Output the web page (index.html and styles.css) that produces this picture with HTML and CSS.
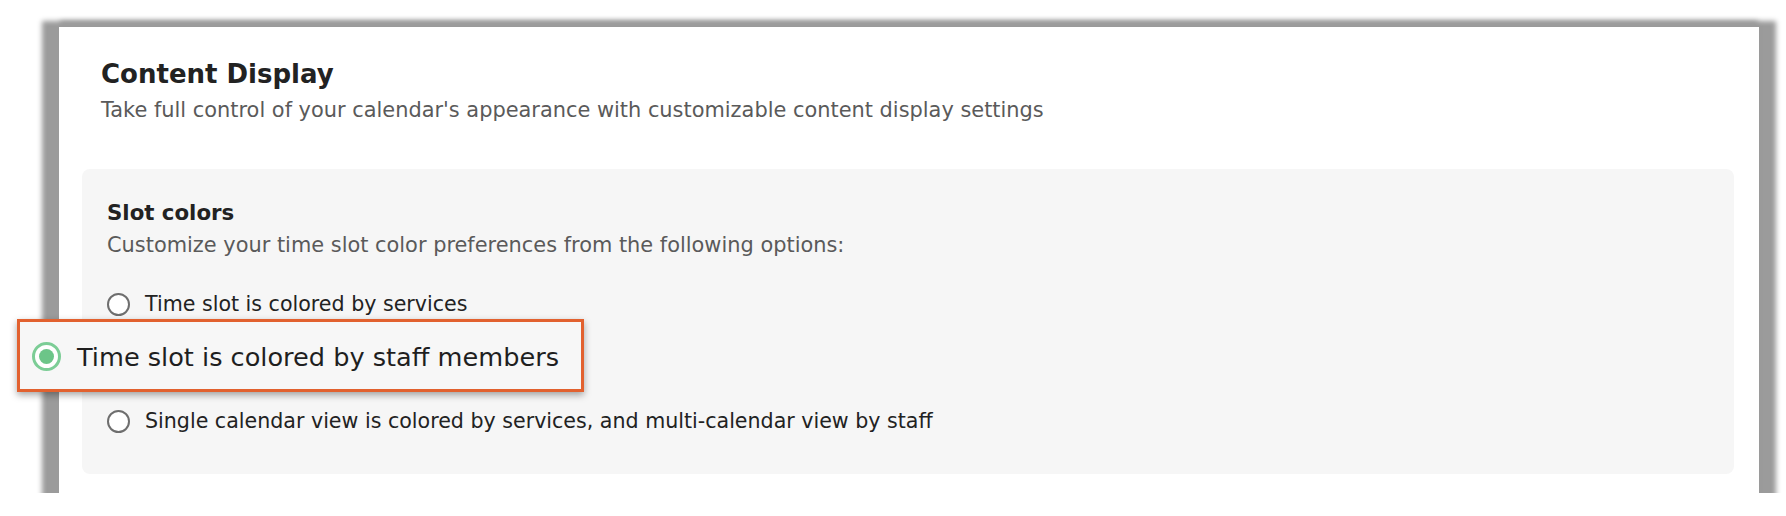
FILE: index.html
```html
<!DOCTYPE html>
<html lang="en">
<head>
<meta charset="utf-8">
<title>Content Display</title>
<link rel="stylesheet" href="styles.css">
</head>
<body>
<div class="stage">
  <section class="card">
    <header class="card-head">
      <h1 class="card-title">Content Display</h1>
      <p class="card-sub">Take full control of your calendar's appearance with customizable content display settings</p>
    </header>
    <div class="panel">
      <h2 class="panel-title">Slot colors</h2>
      <p class="panel-desc">Customize your time slot color preferences from the following options:</p>
      <div class="options">
        <div class="option"><span class="radio"></span><span class="option-text">Time slot is colored by services</span></div>
        <div class="option option-callout">
          <span class="radio-on"><span class="radio-dot"></span></span>
          <span class="callout-text">Time slot is colored by staff members</span>
        </div>
        <div class="option option-last"><span class="radio"></span><span class="option-text">Single calendar view is colored by services, and multi-calendar view by staff</span></div>
      </div>
    </div>
  </section>
</div>
</body>
</html>
```

FILE: styles.css
```css
* { box-sizing: border-box; }
html, body { margin: 0; padding: 0; background: #ffffff; }
body { font-family: "DejaVu Sans", "Noto Sans", sans-serif; color: #222222; }

.stage { padding: 27px 0 0 59px; }

.card {
  width: 1700px;
  height: 466px;
  background: #ffffff;
  padding: 30px 25px 0 23px;
  box-shadow: -9px 2px 5px 8px #9b9b9b, 9px 2px 5px 8px #9b9b9b;
}

.card-head { padding-left: 19px; }
.card-title {
  margin: 0;
  font-size: 26px;
  line-height: 34px;
  font-weight: 600;
  color: #222222;
}
.card-sub {
  margin: 5px 0 0;
  font-size: 20.9px;
  line-height: 28px;
  color: #5a5a5a;
}

.panel {
  margin-top: 45px;
  background: #f6f6f6;
  border-radius: 8px;
  padding: 30px 25px 39px;
}
.panel-title {
  margin: 0;
  font-size: 21.3px;
  line-height: 28px;
  font-weight: 600;
  color: #222222;
}
.panel-desc {
  margin: 5px 0 0;
  font-size: 20.9px;
  line-height: 26px;
  color: #5a5a5a;
}

.options {
  margin-top: 32px;
  display: flex;
  flex-direction: column;
  align-items: flex-start;
}
.option {
  display: flex;
  align-items: center;
  gap: 15px;
  height: 28px;
  font-size: 20.6px;
  color: #222222;
}
.option-last { margin-top: 15px; }
.radio {
  width: 23px;
  height: 23px;
  border-radius: 50%;
  border: 2px solid #6e6e6e;
  background: #ffffff;
  flex: none;
}

.option-callout {
  margin: 1px 0 0 -90px;
  width: 567px;
  height: 73px;
  border: 3px solid #e2612f;
  background: #f7f7f7;
  box-shadow: 0 3px 7px rgba(0, 0, 0, 0.35);
  gap: 16px;
  padding: 2px 0 0 12px;
}
.radio-on {
  width: 29px;
  height: 29px;
  border-radius: 50%;
  border: 3px solid #7ccd96;
  background: #ffffff;
  display: flex;
  align-items: center;
  justify-content: center;
  flex: none;
}
.radio-dot {
  width: 15px;
  height: 15px;
  border-radius: 50%;
  background: #6cc588;
}
.callout-text {
  font-size: 25.6px;
  color: #1f1f1f;
}
```
